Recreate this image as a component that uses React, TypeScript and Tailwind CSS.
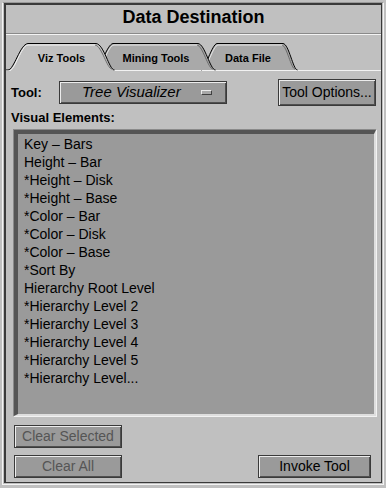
const ITEMS = [
  "Key – Bars",
  "Height – Bar",
  "*Height – Disk",
  "*Height – Base",
  "*Color – Bar",
  "*Color – Disk",
  "*Color – Base",
  "*Sort By",
  "Hierarchy Root Level",
  "*Hierarchy Level 2",
  "*Hierarchy Level 3",
  "*Hierarchy Level 4",
  "*Hierarchy Level 5",
  "*Hierarchy Level...",
];

// Raised Motif-style push button bevel.
const bevel =
  "border border-[#3a3a3a] bg-[#9a9a9a] shadow-[inset_1px_1px_0_#ececec,inset_-1px_-1px_0_#505050]";

function TabShapes() {
  // viewBox uses window coordinates so the numbers read straight off the screenshot
  return (
    <svg
      className="absolute inset-0"
      width="375"
      height="29"
      viewBox="6 42 375 29"
      aria-hidden="true"
    >
      {/* panel top edge */}
      <line x1="6" y1="70.5" x2="381" y2="70.5" stroke="#f2f2f2" strokeWidth="1" />
      {/* Data File (back) */}
      <path
        d="M198 70 L201 70 C205 70 212 44 217 43.5 L283 43.5 C289 44 293 70 297 70 Z"
        fill="#a9a9a9"
      />
      <path d="M201 70 C205 70 212 44 217 43.5 L283 43.5" fill="none" stroke="#000" />
      <path d="M203 69 C207 69 213 45.5 218 45 L283 45" fill="none" stroke="#e8e8e8" />
      <path d="M283 43.5 C289 44 293 70 297.5 70" fill="none" stroke="#000" />
      <path d="M282 45 C287 46 291 69 295 69" fill="none" stroke="#6a6a6a" />
      {/* Mining Tools */}
      <path
        d="M92 70 L95 70 C100 70 107 44 113 43.5 L198 43.5 C205 44 210 70 215 70 Z"
        fill="#a9a9a9"
      />
      <path d="M95 70 C100 70 107 44 113 43.5 L198 43.5" fill="none" stroke="#000" />
      <path d="M97 69 C102 69 108 45.5 114 45 L198 45" fill="none" stroke="#e8e8e8" />
      <path d="M198 43.5 C205 44 210 70 215.5 70" fill="none" stroke="#000" />
      <path d="M197 45 C203 46 208 69 213 69" fill="none" stroke="#6a6a6a" />
      {/* Viz Tools (active, front) */}
      <path
        d="M6 71 L6 70 L8 70 C14 70 20 44 28 43.5 L96 43.5 C104 44 109 70 114 70 L114 71 Z"
        fill="#c0c0c0"
      />
      <path d="M6 70 L8 70 C14 70 20 44 28 43.5 L96 43.5" fill="none" stroke="#000" />
      <path d="M6 71 L9 71 C15 71 21 45.5 28 45 L96 45" fill="none" stroke="#f4f4f4" />
      <path d="M96 43.5 C104 44 109 70 114.5 70" fill="none" stroke="#000" />
      <path d="M95 45 C102 46 107 69 112 69" fill="none" stroke="#6a6a6a" />
    </svg>
  );
}

export default function App() {
  return (
    <div className="h-[488px] w-[386px] bg-[#c0c0c0] pt-[2px] pl-[2px] pr-[2px] pb-[3px] font-['Liberation_Sans',Arial,sans-serif] text-black">
      <div className="h-full border-t border-r border-b border-l border-t-[#9a9a9a] border-r-[#f4f4f4] border-b-[#f4f4f4] border-l-[#f4f4f4] pt-0 pl-px pr-px pb-px">
        <div className="flex h-full flex-col border-t-2 border-l-2 border-r border-b border-[#3a3a3a]">
          {/* title */}
          <div className="flex h-[24px] items-center justify-center text-[18px] font-bold leading-[24px]">
            Data Destination
          </div>
          <div className="mt-[4px] h-[2px] border-t border-b border-t-[#8a8a8a] border-b-[#f4f4f4]" />

          {/* tabs */}
          <div className="relative mt-[7px] h-[29px]">
            <TabShapes />
            <div className="relative flex h-[29px] items-center pt-[3px] text-[11px] font-bold">
              <span className="w-[111px] text-center">Viz Tools</span>
              <span className="w-[78px] text-center">Mining Tools</span>
              <span className="w-[106px] text-center">Data File</span>
            </div>
          </div>

          {/* tool row */}
          <div className="mt-[8px] flex h-[27px] items-center px-[5px]">
            <span className="w-[48px] text-[13px] font-bold">Tool:</span>
            <div className={`flex h-[23px] w-[168px] items-center pl-[22px] pr-[14px] ${bevel}`}>
              <span className="flex-1 text-[15px] italic">Tree Visualizer</span>
              <span className="h-[5px] w-[11px] border border-t-[#ececec] border-l-[#ececec] border-r-[#404040] border-b-[#404040] bg-[#a8a8a8]" />
            </div>
            <div className="flex-1" />
            <div className={`flex h-[27px] w-[98px] items-center justify-center text-[14px] ${bevel}`}>
              Tool Options...
            </div>
          </div>

          <div className="mt-[4px] pl-[5px] text-[13px] font-bold leading-[16px]">Visual Elements:</div>

          {/* list */}
          <div className="mt-[3px] mr-[4px] ml-[7px] h-[288px] border border-t-[#8a8a8a] border-l-[#8a8a8a] border-r-[#f2f2f2] border-b-[#f2f2f2]">
            <div className="h-full border-t-[4px] border-l-[4px] border-r-[2px] border-b-[2px] border-t-[#555] border-l-[#555] border-r-[#dedede] border-b-[#dedede] bg-[#9a9a9a] pt-px pl-[6px]">
              {ITEMS.map((item) => (
                <div key={item} className="h-[18px] text-[14px] leading-[18px]">
                  {item}
                </div>
              ))}
            </div>
          </div>

          {/* buttons */}
          <div className="mt-[8px] pl-[8px]">
            <div className={`flex h-[23px] w-[108px] items-center justify-center text-[14px] text-[#555] ${bevel}`}>
              Clear Selected
            </div>
          </div>
          <div className="mt-[7px] flex items-center justify-between pl-[8px] pr-[10px]">
            <div className={`flex h-[23px] w-[108px] items-center justify-center text-[14px] text-[#555] ${bevel}`}>
              Clear All
            </div>
            <div className={`flex h-[23px] w-[113px] items-center justify-center text-[14px] ${bevel}`}>
              Invoke Tool
            </div>
          </div>
        </div>
      </div>
    </div>
  );
}
